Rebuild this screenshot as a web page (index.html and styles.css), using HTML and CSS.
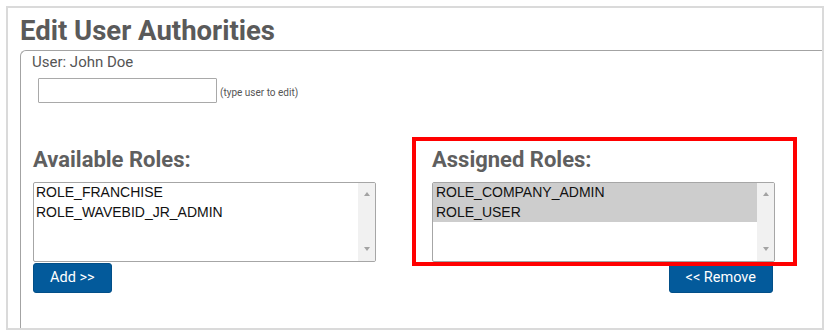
FILE: index.html
```html
<!DOCTYPE html>
<html>
<head>
<meta charset="utf-8">
<link rel="stylesheet" href="styles.css">
</head>
<body>
<div class="frame">
  <h1 class="title">Edit User Authorities</h1>
  <div class="fieldset">
    <div class="user">User: John Doe</div>
    <div class="search-row">
      <input class="search" type="text">
      <span class="hint">(type user to edit)</span>
    </div>
    <div class="columns">
      <div class="col col-left">
        <h2 class="heading">Available Roles:</h2>
        <div class="listbox">
          <div class="options">
            <div class="option">ROLE_FRANCHISE</div>
            <div class="option">ROLE_WAVEBID_JR_ADMIN</div>
          </div>
          <div class="scrollbar"><span class="arrow up"></span><span class="arrow down"></span></div>
        </div>
        <div class="btn-row"><button class="btn">Add &gt;&gt;</button></div>
      </div>
      <div class="col col-right">
        <h2 class="heading">Assigned Roles:</h2>
        <div class="listbox">
          <div class="options">
            <div class="option selected">ROLE_COMPANY_ADMIN</div>
            <div class="option selected">ROLE_USER</div>
          </div>
          <div class="scrollbar"><span class="arrow up"></span><span class="arrow down"></span></div>
        </div>
        <div class="btn-row btn-row-right"><button class="btn">&lt;&lt; Remove</button></div>
        <div class="highlight"></div>
      </div>
    </div>
  </div>
</div>
</body>
</html>
```
FILE: styles.css
```css
html, body {
  margin: 0;
  padding: 0;
  background: #ffffff;
}
body {
  font-family: Roboto, "Liberation Sans", Arial, sans-serif;
  color: #555555;
}
.frame {
  margin: 6px;
  width: 818px;
  height: 324px;
  box-sizing: border-box;
  border: 2px solid #dadada;
  overflow: hidden;
  padding: 6px 0 0 12px;
  display: flex;
  flex-direction: column;
}
.title {
  margin: 0;
  font-size: 27.5px;
  line-height: 33px;
  font-weight: 700;
  color: #5a5a5a;
}
.fieldset {
  margin-top: 3px;
  flex: 1;
  border-top: 1px solid #a3a3a3;
  border-left: 1px solid #a3a3a3;
  border-top-left-radius: 6px;
  padding: 3px 0 0 12px;
}
.user {
  font-size: 15px;
  line-height: 16px;
  margin-left: -1px;
  color: #555555;
}
.search-row {
  margin-top: 8px;
  display: flex;
  align-items: flex-end;
}
.search {
  margin: 0 0 0 5px;
  width: 179px;
  height: 25px;
  box-sizing: border-box;
  border: 1px solid #a9a9a9;
  border-radius: 1px;
  padding: 0;
}
.hint {
  font-size: 10px;
  line-height: 12px;
  margin: 0 0 4px 3px;
  color: #555555;
}
.columns {
  margin-top: 44px;
  display: flex;
}
.col {
  display: flex;
  flex-direction: column;
}
.col-left {
  width: 399px;
}
.col-right {
  width: 343px;
  position: relative;
}
.heading {
  margin: 0;
  font-size: 22px;
  line-height: 26px;
  font-weight: 700;
  color: #5f5f5f;
}
.listbox {
  margin-top: 9px;
  width: 343px;
  height: 80px;
  box-sizing: border-box;
  border: 1px solid #a6a6a6;
  border-radius: 2px;
  display: flex;
  overflow: hidden;
  background: #ffffff;
}
.options {
  flex: 1;
}
.option {
  font-family: "Liberation Sans", Arial, sans-serif;
  font-size: 14px;
  line-height: 19.5px;
  height: 19.5px;
  padding-left: 2px;
  color: #111111;
  white-space: nowrap;
}
.col-right .option {
  padding-left: 3px;
}
.option.selected {
  background: #cdcdcd;
}
.scrollbar {
  width: 17px;
  background: #f1f1f1;
  display: flex;
  flex-direction: column;
  align-items: center;
  justify-content: space-between;
  padding: 9px 0 10px;
  box-sizing: border-box;
}
.arrow {
  width: 0;
  height: 0;
  border-left: 3.5px solid transparent;
  border-right: 3.5px solid transparent;
}
.arrow.up {
  border-bottom: 4px solid #a3a3a3;
}
.arrow.down {
  border-top: 4px solid #a3a3a3;
}
.btn-row {
  margin-top: 1px;
  display: flex;
}
.btn-row-right {
  justify-content: flex-end;
  padding-right: 2px;
}
.btn {
  height: 30px;
  padding: 0 16px;
  background: #035a9b;
  color: #ffffff;
  border: 1px solid #024f88;
  border-radius: 3px;
  font-family: Roboto, "Liberation Sans", Arial, sans-serif;
  font-size: 14.5px;
  line-height: 28px;
  font-weight: 400;
}
.highlight {
  position: absolute;
  top: -10px;
  left: -20px;
  width: 385px;
  height: 129px;
  box-sizing: border-box;
  border: 4px solid #ff0000;
  pointer-events: none;
}
```
